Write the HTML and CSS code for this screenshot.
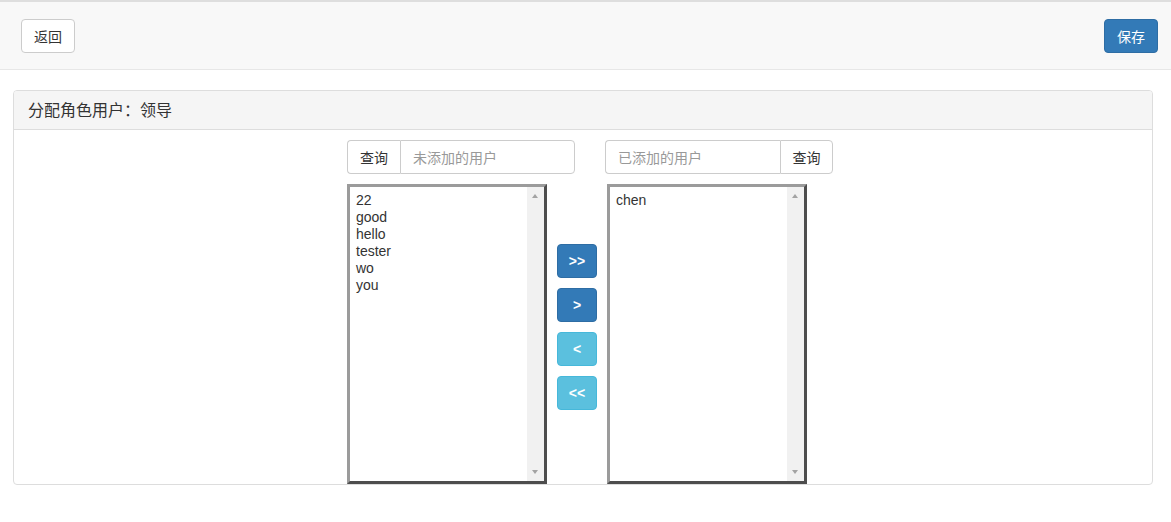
FILE: index.html
```html
<!DOCTYPE html>
<html lang="zh">
<head>
<meta charset="utf-8">
<title>分配角色用户</title>
<link rel="stylesheet" href="styles.css">
</head>
<body>
<div class="navbar">
  <button class="btn btn-default">返回</button>
  <button class="btn btn-primary">保存</button>
</div>
<div class="panel">
  <div class="panel-heading">分配角色用户：领导</div>
  <div class="panel-body">
    <div class="search-row">
      <div class="input-group">
        <span class="addon addon-left">查询</span>
        <input class="form-input" placeholder="未添加的用户">
      </div>
      <div class="input-group">
        <input class="form-input input-left" placeholder="已添加的用户">
        <span class="addon addon-right">查询</span>
      </div>
    </div>
    <div class="list-row">
      <div class="listbox">
        <div class="options">
          <div class="option">22</div>
          <div class="option">good</div>
          <div class="option">hello</div>
          <div class="option">tester</div>
          <div class="option">wo</div>
          <div class="option">you</div>
        </div>
        <div class="scrollbar"><span class="arrow-up"></span><span class="arrow-down"></span></div>
      </div>
      <div class="move-buttons">
        <button class="btn btn-move btn-primary">&gt;&gt;</button>
        <button class="btn btn-move btn-primary">&gt;</button>
        <button class="btn btn-move btn-info">&lt;</button>
        <button class="btn btn-move btn-info">&lt;&lt;</button>
      </div>
      <div class="listbox">
        <div class="options">
          <div class="option">chen</div>
        </div>
        <div class="scrollbar"><span class="arrow-up"></span><span class="arrow-down"></span></div>
      </div>
    </div>
  </div>
</div>
</body>
</html>
```
FILE: styles.css
```css
* { box-sizing: border-box; }
html, body {
  margin: 0;
  padding: 0;
  background: #fff;
  font-family: "Liberation Sans", "Noto Sans CJK SC", Arial, sans-serif;
  font-size: 14px;
  line-height: 20px;
  color: #333;
}
.navbar {
  display: flex;
  justify-content: space-between;
  align-items: center;
  background: #f8f8f8;
  border-top: 2px solid #dedede;
  border-bottom: 1px solid #e7e7e7;
  padding: 17px 13px 16px 21px;
}
.btn {
  font-family: "Noto Sans CJK SC", "Liberation Sans", sans-serif;
  font-size: 14px;
  line-height: 20px;
  height: 34px;
  padding: 6px 12px;
  border: 1px solid transparent;
  border-radius: 4px;
  margin: 0;
  cursor: pointer;
}
.btn-default {
  background: #fff;
  border-color: #ccc;
  color: #333;
  width: 54px;
}
.btn-primary {
  background: #337ab7;
  border-color: #2e6da4;
  color: #fff;
  width: 54px;
}
.btn-info {
  background: #5bc0de;
  border-color: #46b8da;
  color: #fff;
}
.panel {
  margin: 20px 18px 0 13px;
  border: 1px solid #ddd;
  border-radius: 4px;
  background: #fff;
}
.panel-heading {
  height: 39px;
  background: #f5f5f5;
  border-bottom: 1px solid #ddd;
  border-radius: 3px 3px 0 0;
  padding: 8px 14px 0;
  font-family: "Noto Sans CJK SC", sans-serif;
  font-size: 16px;
  line-height: 20px;
  color: #333;
}
.panel-body {
  padding: 10px 0 0 333px;
}
.search-row {
  display: flex;
  gap: 30px;
  margin-bottom: 10px;
}
.input-group {
  display: flex;
  width: 228px;
  height: 34px;
}
.addon {
  display: flex;
  align-items: center;
  justify-content: center;
  width: 53px;
  flex: none;
  border: 1px solid #ccc;
  background: #fff;
  font-family: "Noto Sans CJK SC", sans-serif;
  font-size: 14px;
  color: #333;
}
.addon-left {
  border-radius: 4px 0 0 4px;
  border-right: 0;
}
.addon-right {
  border-radius: 0 4px 4px 0;
}
.form-input {
  flex: 1;
  min-width: 0;
  height: 34px;
  border: 1px solid #ccc;
  border-radius: 0 4px 4px 0;
  padding: 6px 12px;
  font-family: "Noto Sans CJK SC", sans-serif;
  font-size: 14px;
  color: #555;
  outline: none;
  margin: 0;
}
.form-input.input-left {
  border-radius: 4px 0 0 4px;
  border-right: 0;
}
.form-input::placeholder {
  color: #999;
}
.list-row {
  display: flex;
  align-items: flex-start;
}
.listbox {
  display: flex;
  width: 200px;
  height: 300px;
  border-style: solid;
  border-width: 3px;
  border-color: #9b9b9b #4d4d4d #4d4d4d #9b9b9b;
  background: #fff;
}
.options {
  flex: 1;
  padding: 5px 6px 4px;
  font-family: "Liberation Sans", Arial, sans-serif;
  font-size: 14px;
}
.option {
  line-height: 17px;
  color: #333;
}
.scrollbar {
  position: relative;
  width: 17px;
  flex: none;
  background: #f1f1f1;
}
.arrow-up, .arrow-down {
  position: absolute;
  left: 5px;
  width: 0;
  height: 0;
  border-left: 3.5px solid transparent;
  border-right: 3.5px solid transparent;
}
.arrow-up {
  top: 7px;
  border-bottom: 4px solid #a3a3a3;
}
.arrow-down {
  bottom: 7px;
  border-top: 4px solid #a3a3a3;
}
.move-buttons {
  display: flex;
  flex-direction: column;
  gap: 10px;
  padding-top: 60px;
  margin: 0 10px;
}
.btn-move {
  width: 40px;
  height: 34px;
  padding: 0;
  font-family: "Liberation Sans", Arial, sans-serif;
  font-weight: bold;
  font-size: 14px;
}
```
